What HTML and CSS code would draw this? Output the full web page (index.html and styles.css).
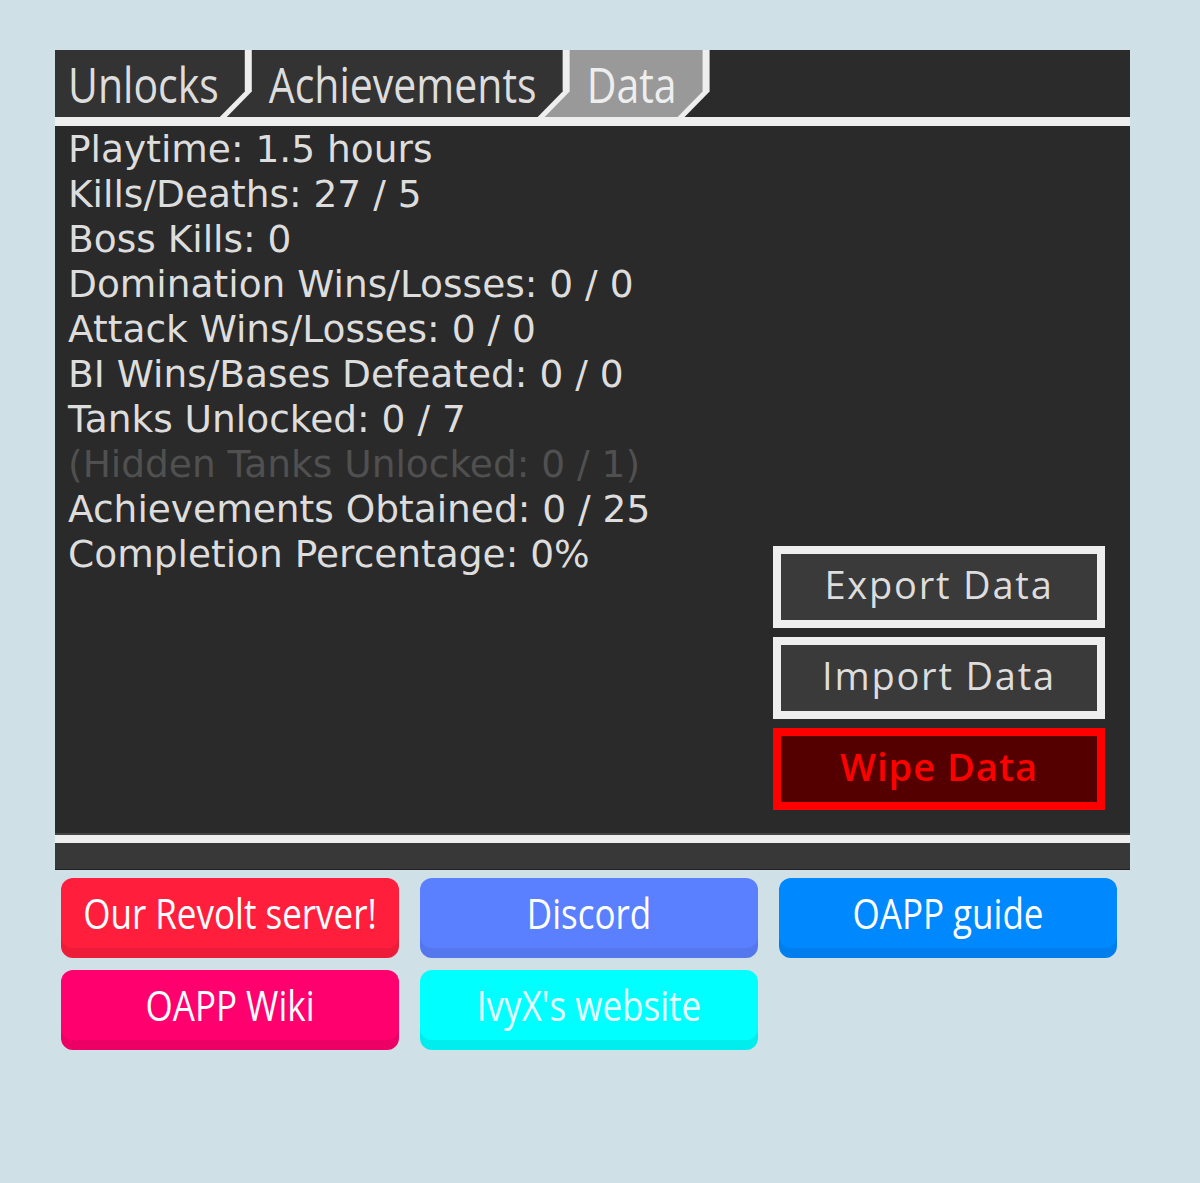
FILE: index.html
```html
<!DOCTYPE html>
<html lang="en">
<head>
  <meta charset="UTF-8">
  <title>Data</title>
  <link rel="stylesheet" href="styles.css">
</head>
<body>
  <div class="panel">
    <div class="tabs">
      <div class="tab"><div class="tab-face"><span class="tab-label">Unlocks</span></div></div>
      <div class="tab"><div class="tab-face"><span class="tab-label">Achievements</span></div></div>
      <div class="tab active"><div class="tab-face"><span class="tab-label">Data</span></div></div>
    </div>
    <div class="content">
      <div class="stats">
        <div>Playtime: 1.5 hours</div>
        <div>Kills/Deaths: 27 / 5</div>
        <div>Boss Kills: 0</div>
        <div>Domination Wins/Losses: 0 / 0</div>
        <div>Attack Wins/Losses: 0 / 0</div>
        <div>BI Wins/Bases Defeated: 0 / 0</div>
        <div>Tanks Unlocked: 0 / 7</div>
        <div class="hidden-stat">(Hidden Tanks Unlocked: 0 / 1)</div>
        <div>Achievements Obtained: 0 / 25</div>
        <div>Completion Percentage: 0%</div>
      </div>
      <div class="actions">
        <button class="data-btn">Export Data</button>
        <button class="data-btn">Import Data</button>
        <button class="data-btn wipe">Wipe Data</button>
      </div>
    </div>
    <div class="footer-bar"></div>
  </div>

  <div class="links">
    <a class="link revolt" href="#"><span>Our Revolt server!</span></a>
    <a class="link discord" href="#"><span>Discord</span></a>
    <a class="link guide" href="#"><span>OAPP guide</span></a>
    <a class="link wiki" href="#"><span>OAPP Wiki</span></a>
    <a class="link ivy" href="#"><span>IvyX's website</span></a>
  </div>
</body>
</html>
```

FILE: styles.css
```css
body {
  margin: 0;
  background: #cfe0e7;
  font-family: 'Open Sans', 'Noto Sans', sans-serif;
}
.panel {
  width: 1075px;
  margin: 50px 0 0 55px;
}
.tabs {
  display: flex;
  height: 67px;
  background: #2b2b2b;
  border-bottom: 9px solid #eee;
}
.tab {
  position: relative;
  background: #eee;
  padding-right: 7px;
  clip-path: polygon(0 0, 100% 0, 100% 62%, calc(100% - 25px) 100%, 0 100%);
}
.tab:nth-child(1) { z-index: 3; }
.tab:nth-child(2) { z-index: 2; }
.tab:nth-child(3) { z-index: 1; }
.tab + .tab {
  margin-left: -25px;
}
.tab-face {
  display: flex;
  align-items: center;
  height: 100%;
  padding: 0 26px 0 13px;
  background: #333;
  color: #ddd;
  font-size: 41px;
  clip-path: polygon(0 0, 100% 0, 100% 62%, calc(100% - 25px) 100%, 0 100%);
}
.tab + .tab .tab-face {
  padding-left: 42px;
}
.tab.active .tab-face {
  background: #999;
  color: #eee;
}
.tab-label {
  display: inline-block;
  transform: scaleY(1.2);
}
.content {
  display: flex;
  justify-content: space-between;
  height: 709px;
  box-sizing: border-box;
  padding: 1px 25px 23px 13px;
  background: #2a2a2a;
  border-bottom: 2px solid #444;
}
.stats {
  color: #ddd;
  font-family: 'DejaVu Sans', sans-serif;
  font-size: 37.5px;
  line-height: 45px;
}
.hidden-stat {
  color: #505050;
}
.actions {
  display: flex;
  flex-direction: column;
  justify-content: flex-end;
  gap: 9px;
}
.data-btn {
  width: 332px;
  height: 82px;
  border: 8px solid #eee;
  background: #3a3a3a;
  color: #ddd;
  font-family: inherit;
  font-size: 38px;
  letter-spacing: 1.8px;
  padding: 0 0 6px;
}
.data-btn.wipe {
  border-color: #ff0000;
  background: #550000;
  color: #ff0000;
  font-weight: 600;
  letter-spacing: 1px;
}
.footer-bar {
  height: 26px;
  background: #383838;
  border-top: 8px solid #eee;
  border-bottom: 1px solid #222;
}
.links {
  display: grid;
  grid-template-columns: repeat(3, 338px);
  gap: 12px 21px;
  margin: 8px 0 0 61px;
}
.link {
  display: flex;
  justify-content: center;
  align-items: center;
  height: 80px;
  box-sizing: border-box;
  padding-bottom: 12px;
  border-radius: 12px;
  color: #fff;
  font-size: 35px;
  text-decoration: none;
  box-shadow: inset 0 -10px 0 rgba(0, 0, 0, 0.07);
}
.link span {
  display: inline-block;
  transform: scaleY(1.2);
}
.revolt { background: #ff1f3d; }
.discord { background: #5b80ff; }
.guide { background: #0088ff; }
.wiki { background: #ff006e; }
.ivy { background: #00ffff; color: #e6ffff; }
```
